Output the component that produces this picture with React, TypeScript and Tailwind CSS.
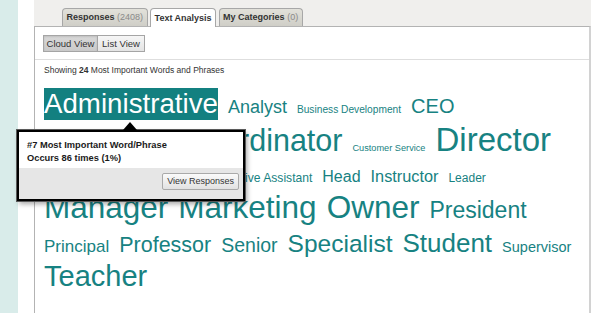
const teal = 'text-[#178282]';

function Tab({ label, count, active = false }: { label: string; count?: string; active?: boolean }) {
  return (
    <div
      className={`flex items-center px-[3.5px] rounded-t-[4px] border border-b-0 border-[#a7a7a7] text-[9px] leading-none ${
        active
          ? 'relative z-10 h-[19px] -mb-px bg-white'
          : 'h-[18px] bg-gradient-to-b from-[#e2e1da] to-[#cfcec7]'
      }`}
    >
      <span className="font-bold text-[#333]">{label}</span>
      {count && <span className="text-[#8a8a8a]">&nbsp;{count}</span>}
    </div>
  );
}

/**
 * 悬浮提示框
 */
function WordTooltip() {
  return (
    <div className="absolute left-[-18px] top-[42px] z-20 w-[228px] h-[71px] flex flex-col border-2 border-black bg-white shadow-[0_0_0_1px_#5a5a5a,2px_3px_5px_rgba(0,0,0,0.35)]">
      {/* 箭头 */}
      <div className="absolute left-[104px] top-[-10px] w-0 h-0 border-l-[7px] border-r-[7px] border-b-[8px] border-l-transparent border-r-transparent border-b-black" />
      <div className="pl-[8px] pt-[7px] pb-[3px] text-[9.3px] leading-[13px] font-bold text-[#1a1a1a]">
        <div>#7 Most Important Word/Phrase</div>
        <div>Occurs 86 times (1%)</div>
      </div>
      <div className="flex-1 flex justify-end items-start pt-[5px] pr-[4px] bg-[#e6e6e6]">
        <button className="h-[17px] px-[4px] text-[9px] leading-none text-[#333] border border-[#a9a9a9] rounded-[2px] bg-gradient-to-b from-[#fafafa] to-[#e2e2e2]">
          View Responses
        </button>
      </div>
    </div>
  );
}

export default function App() {
  return (
    <div className="flex w-[600px] h-[313px] overflow-hidden bg-white font-['Liberation_Sans',Arial,Helvetica,sans-serif]">
      <div className="w-[18px] bg-[#d9ecea]" />
      <div className="w-[16px]" />

      <div className="w-[557px] flex flex-col">
        {/* 标签栏 */}
        <div className="h-[26px] flex items-end gap-[2.5px] pl-[28px] bg-[#f0efed]">
          <Tab label="Responses" count="(2408)" />
          <Tab label="Text Analysis" active />
          <Tab label="My Categories" count="(0)" />
        </div>

        <div className="flex-1 border-t border-l border-[#b3b3b3] border-r-2 border-r-[#d2d2d2] bg-white">
          {/* 视图切换 */}
          <div className="flex pl-[8px] pt-[8px] pb-[7px] border-b border-[#dedede]">
            <button className="h-[17px] w-[55px] text-[9.5px] leading-none text-[#333] border border-[#a5a5a5] bg-gradient-to-b from-[#d9d9d9] to-[#cacaca] shadow-[inset_0_1px_2px_rgba(0,0,0,0.12)]">
              Cloud View
            </button>
            <button className="h-[17px] w-[48px] -ml-px text-[9.5px] leading-none text-[#333] border border-[#a5a5a5] bg-gradient-to-b from-[#f6f6f6] to-[#e4e4e4]">
              List View
            </button>
          </div>

          <div className="pl-[9px] pt-[4px] text-[8.5px] leading-[12px] text-[#333]">
            Showing <b>24</b> Most Important Words and Phrases
          </div>

          {/* 词云 */}
          <div className={`relative mt-[12px] pl-[9px] ${teal}`}>
            <div className="flex items-baseline gap-x-[10px] whitespace-nowrap">
              <span className="text-[27.7px] leading-[32px] bg-[#138080] text-white">Administrative</span>
              <span className="text-[18px] leading-none">Analyst</span>
              <span className="text-[10.2px] leading-none">Business Development</span>
              <span className="text-[20px] leading-none">CEO</span>
            </div>
            <div className="flex items-baseline gap-x-[10px] whitespace-nowrap mt-[3px]">
              <span className="text-[27px] leading-none">Consultant</span>
              <span className="text-[30.5px] leading-none">Coordinator</span>
              <span className="text-[9.2px] leading-none">Customer Service</span>
              <span className="text-[33px] leading-none">Director</span>
            </div>
            <div className="flex items-baseline gap-x-[10px] whitespace-nowrap mt-[10.7px]">
              <span className="text-[18px] leading-none">Educator</span>
              <span className="text-[18px] leading-none">Engineer</span>
              <span className="text-[12.1px] leading-none">Executive Assistant</span>
              <span className="text-[16px] leading-none">Head</span>
              <span className="text-[16.3px] leading-none">Instructor</span>
              <span className="text-[12px] leading-none">Leader</span>
            </div>
            <div className="flex items-baseline gap-x-[10px] whitespace-nowrap mt-[7.6px]">
              <span className="text-[31.5px] leading-none">Manager</span>
              <span className="text-[31.5px] leading-none">Marketing</span>
              <span className="text-[31.5px] leading-none">Owner</span>
              <span className="text-[23px] leading-none">President</span>
            </div>
            <div className="flex items-baseline gap-x-[10px] whitespace-nowrap mt-[6.2px]">
              <span className="text-[17px] leading-none">Principal</span>
              <span className="text-[21.5px] leading-none">Professor</span>
              <span className="text-[19.5px] leading-none">Senior</span>
              <span className="text-[24.5px] leading-none">Specialist</span>
              <span className="text-[26px] leading-none">Student</span>
              <span className="text-[14.5px] leading-none">Supervisor</span>
            </div>
            <div className="flex items-baseline gap-x-[10px] whitespace-nowrap mt-[5.5px]">
              <span className="text-[29px] leading-none">Teacher</span>
            </div>

            <WordTooltip />
          </div>
        </div>
      </div>
    </div>
  );
}
